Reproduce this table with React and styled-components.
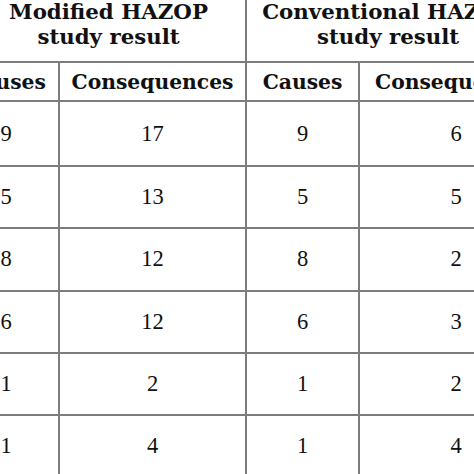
import React from "react";
import styled, { createGlobalStyle } from "styled-components";

const GlobalStyle = createGlobalStyle`
  html, body {
    margin: 0;
    padding: 0;
    background: #fff;
  }
`;

const Frame = styled.div`
  width: 474px;
  height: 474px;
  overflow: hidden;
  background: #fff;
`;

const Table = styled.table`
  border-collapse: collapse;
  table-layout: fixed;
  width: 600px;
  margin-left: -48px;
  color: #111;
`;

const GroupHead = styled.th`
  height: 61px;
  padding: ${(p) => (p.$side === "left" ? "0 0 0 19px" : "0 24px 0 0")};
  vertical-align: top;
  font-family: "DejaVu Serif", "Liberation Serif", serif;
  font-weight: bold;
  font-size: 21.3px;
  line-height: 25px;
  text-align: center;
  border-bottom: 2px solid #7c7c7c;
  border-right: ${(p) => (p.$side === "left" ? "2px solid #7c7c7c" : "none")};
`;

const HeadText = styled.div`
  margin-top: -1px;
  white-space: nowrap;
`;

const ColHead = styled.th`
  height: 37px;
  padding: 0;
  font-family: "DejaVu Serif", "Liberation Serif", serif;
  font-weight: bold;
  font-size: 20.3px;
  text-align: center;
  white-space: nowrap;
  overflow: hidden;
  border: 2px solid #7c7c7c;
  border-top: none;
`;

const Cell = styled.td`
  height: ${(p) => (p.$first ? "63px" : "60.3px")};
  padding: 0;
  font-family: "Liberation Serif", serif;
  font-size: 22.5px;
  text-align: center;
  border: 2px solid #7c7c7c;
`;

const rows = [
  [9, 17, 9, 6],
  [5, 13, 5, 5],
  [8, 12, 8, 2],
  [6, 12, 6, 3],
  [1, 2, 1, 2],
  [1, 4, 1, 4],
];

export default function App() {
  return (
    <Frame>
      <GlobalStyle />
      <Table>
        <colgroup>
          <col style={{ width: 106 }} />
          <col style={{ width: 187 }} />
          <col style={{ width: 113 }} />
          <col style={{ width: 194 }} />
        </colgroup>
        <thead>
          <tr>
            <GroupHead colSpan={2} $side="left">
              <HeadText>
                Modified HAZOP
                <br />
                study result
              </HeadText>
            </GroupHead>
            <GroupHead colSpan={2} $side="right">
              <HeadText>
                Conventional HAZOP
                <br />
                study result
              </HeadText>
            </GroupHead>
          </tr>
          <tr>
            <ColHead>Causes</ColHead>
            <ColHead>Consequences</ColHead>
            <ColHead>Causes</ColHead>
            <ColHead>Consequences</ColHead>
          </tr>
        </thead>
        <tbody>
          {rows.map((r, i) => (
            <tr key={i}>
              {r.map((v, j) => (
                <Cell key={j} $first={i === 0}>
                  {v}
                </Cell>
              ))}
            </tr>
          ))}
        </tbody>
      </Table>
    </Frame>
  );
}
